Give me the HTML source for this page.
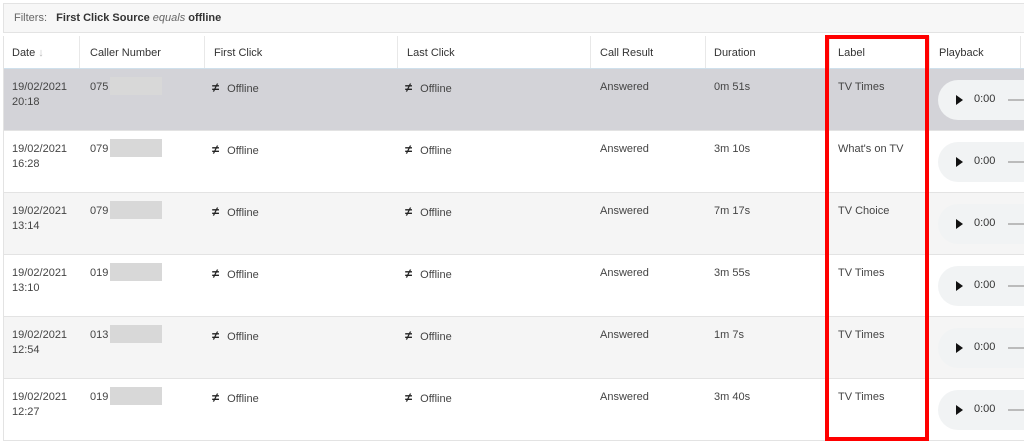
<!DOCTYPE html>
<html><head><meta charset="utf-8"><style>
body{margin:0;width:1024px;height:444px;overflow:hidden;background:#fff;font-family:"Liberation Sans",sans-serif;font-size:11px;color:#444;position:relative}
.filter{position:absolute;left:3px;top:3px;width:1030px;height:30px;background:#f7f7f7;border:1px solid #e3e3e3;box-sizing:border-box;line-height:28px;padding-left:10px;color:#666}
.filter b{color:#333}
.tbl{position:absolute;left:3px;top:36px;width:1040px;border-left:1px solid #e3e3e3}
.row{position:relative;height:62px;border-bottom:1px solid #e3e3e3;box-sizing:border-box}
.hdr{height:33px;border-bottom:1px solid #cfe0ec;color:#333}
.c{position:absolute;top:11px;line-height:15px}
.hdr .c{top:10px}
.v{position:absolute;top:0;bottom:0;width:1px;background:#e8e8e8}
.blur{position:absolute;left:20px;top:-3px;width:52px;height:18px;background:#d8d8d8}
.ne{font-weight:bold;font-size:13px;margin-right:8px;color:#222}
.pl{position:absolute;left:934px;top:11px;width:120px;height:40px;border-radius:20px;background:#f1f3f4}
.pl .t{position:absolute;left:18px;top:15px;width:0;height:0;border-left:7px solid #111;border-top:5px solid transparent;border-bottom:5px solid transparent}
.pl .tm{position:absolute;left:36px;top:13px;color:#333}
.pl .ln{position:absolute;left:70px;top:19px;width:20px;height:2px;background:#bbb}
.red{position:absolute;left:825px;top:35px;width:104px;height:406px;border:4px solid #f00;box-sizing:border-box}
</style></head><body>
<div class="filter">Filters:&nbsp;&nbsp; <b>First Click Source</b> <i>equals</i> <b>offline</b></div>
<div class="tbl">
<div class="row hdr">
<div class="v" style="left:75px"></div><div class="v" style="left:200px"></div><div class="v" style="left:393px"></div><div class="v" style="left:586px"></div><div class="v" style="left:701px"></div><div class="v" style="left:825px"></div><div class="v" style="left:925px"></div><div class="v" style="left:1016px"></div>
<span class="c" style="left:8px">Date <span style="color:#bbb">↓</span></span><span class="c" style="left:86px">Caller Number</span><span class="c" style="left:210px">First Click</span><span class="c" style="left:403px">Last Click</span><span class="c" style="left:596px">Call Result</span><span class="c" style="left:710px">Duration</span><span class="c" style="left:834px">Label</span><span class="c" style="left:935px">Playback</span>
</div>
<div class="row" style="background:#d3d3d8"><span class="c" style="left:8px">19/02/2021<br>20:18</span><span class="c" style="left:86px">075<span class="blur"></span></span><span class="c" style="left:208px"><span class="ne">≠</span>Offline</span><span class="c" style="left:401px"><span class="ne">≠</span>Offline</span><span class="c" style="left:596px">Answered</span><span class="c" style="left:710px">0m 51s</span><span class="c" style="left:834px">TV Times</span><div class="pl"><div class="t"></div><span class="tm">0:00</span><div class="ln"></div></div></div>
<div class="row"><span class="c" style="left:8px">19/02/2021<br>16:28</span><span class="c" style="left:86px">079<span class="blur"></span></span><span class="c" style="left:208px"><span class="ne">≠</span>Offline</span><span class="c" style="left:401px"><span class="ne">≠</span>Offline</span><span class="c" style="left:596px">Answered</span><span class="c" style="left:710px">3m 10s</span><span class="c" style="left:834px">What's on TV</span><div class="pl"><div class="t"></div><span class="tm">0:00</span><div class="ln"></div></div></div>
<div class="row" style="background:#f5f5f5"><span class="c" style="left:8px">19/02/2021<br>13:14</span><span class="c" style="left:86px">079<span class="blur"></span></span><span class="c" style="left:208px"><span class="ne">≠</span>Offline</span><span class="c" style="left:401px"><span class="ne">≠</span>Offline</span><span class="c" style="left:596px">Answered</span><span class="c" style="left:710px">7m 17s</span><span class="c" style="left:834px">TV Choice</span><div class="pl"><div class="t"></div><span class="tm">0:00</span><div class="ln"></div></div></div>
<div class="row"><span class="c" style="left:8px">19/02/2021<br>13:10</span><span class="c" style="left:86px">019<span class="blur"></span></span><span class="c" style="left:208px"><span class="ne">≠</span>Offline</span><span class="c" style="left:401px"><span class="ne">≠</span>Offline</span><span class="c" style="left:596px">Answered</span><span class="c" style="left:710px">3m 55s</span><span class="c" style="left:834px">TV Times</span><div class="pl"><div class="t"></div><span class="tm">0:00</span><div class="ln"></div></div></div>
<div class="row" style="background:#f5f5f5"><span class="c" style="left:8px">19/02/2021<br>12:54</span><span class="c" style="left:86px">013<span class="blur"></span></span><span class="c" style="left:208px"><span class="ne">≠</span>Offline</span><span class="c" style="left:401px"><span class="ne">≠</span>Offline</span><span class="c" style="left:596px">Answered</span><span class="c" style="left:710px">1m 7s</span><span class="c" style="left:834px">TV Times</span><div class="pl"><div class="t"></div><span class="tm">0:00</span><div class="ln"></div></div></div>
<div class="row"><span class="c" style="left:8px">19/02/2021<br>12:27</span><span class="c" style="left:86px">019<span class="blur"></span></span><span class="c" style="left:208px"><span class="ne">≠</span>Offline</span><span class="c" style="left:401px"><span class="ne">≠</span>Offline</span><span class="c" style="left:596px">Answered</span><span class="c" style="left:710px">3m 40s</span><span class="c" style="left:834px">TV Times</span><div class="pl"><div class="t"></div><span class="tm">0:00</span><div class="ln"></div></div></div>
</div>
<div class="red"></div>
</body></html>
